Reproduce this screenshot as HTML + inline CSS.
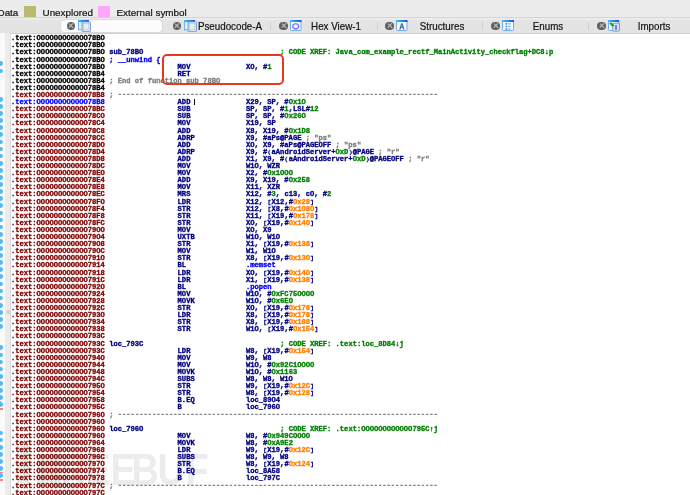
<!DOCTYPE html>
<html><head><meta charset="utf-8">
<style>
html,body{margin:0;padding:0;width:690px;height:495px;overflow:hidden;background:#fff;position:relative}
*{box-sizing:border-box}
.legend{position:absolute;left:0;top:0;width:690px;height:18px;background:#ececec;border-bottom:0.8px solid #d4d4d4}
.lt{position:absolute;top:6.9px;font:9.9px "Liberation Sans",sans-serif;color:#111;white-space:pre;line-height:12px;-webkit-text-stroke:0.2px #111;filter:grayscale(0)}
.sw{position:absolute;top:6.2px;width:11.5px;height:11px}
.tabbar{position:absolute;left:0;top:18px;width:690px;height:15.5px;background:linear-gradient(#efefef 0,#ececec 1.2px,#e4e4e4 2.5px,#e3e3e3 100%);border-bottom:1px solid #cdcdcd}
.atab{position:absolute;left:60.3px;top:18.6px;width:102.3px;height:14.4px;background:#fcfcfc;border-radius:4.5px;border:1px solid #d9d9d9}
.cls{position:absolute;top:21.9px;width:8.6px;height:8.6px;border-radius:50%;background:#5f5f5f}
.cls:before,.cls:after{content:"";position:absolute;left:1.5px;top:3.6px;width:5.6px;height:1.4px;background:#c4c4c4;transform:rotate(45deg)}
.cls:after{transform:rotate(-45deg)}
.ico{position:absolute;top:20px}
.tt{position:absolute;top:20.5px;font:10.3px "Liberation Sans",sans-serif;transform:scaleX(0.95);color:#111;white-space:pre;line-height:12px;-webkit-text-stroke:0.2px #111;filter:grayscale(0);text-align:center;width:100px}
.sep{position:absolute;top:22px;width:1px;height:8px;background:#cfcfcf}
.lm{position:absolute;left:0;top:33px;width:5px;height:462px;background:#fafafa}
.gs{position:absolute;left:5px;top:33px;width:5.6px;height:462px;background:#ebebeb;border-right:1px solid #dcdcdc}
.codebox{position:absolute;left:10.5px;top:33px;width:680px;height:462px;background:#fff;border-top:1px solid #d0d0d0}
.dot{position:absolute;left:-2.9px;width:5.9px;height:4.8px;border-radius:50%;background:#55b8f6}
.pk{position:absolute;left:0;width:3px;height:1.6px;background:#ff7f80}
.sc{position:absolute;left:6px;top:309.5px;width:4.6px;height:4.6px;border-radius:50%;background:#d2d2d2}
.code{position:absolute;left:11.0px;top:0;width:680px;height:495px;filter:grayscale(0)}
.r{position:absolute;left:0;height:7.1px;width:680px;font:bold 7.12px "Liberation Mono",monospace;line-height:7.1px;white-space:pre;-webkit-text-stroke:0.35px currentColor}
.br{display:inline-block;font-weight:normal;transform:scaleY(0.78);transform-origin:50% 58%}
.r i{position:absolute;top:0;font-style:normal}
.n{color:#00007f}.b{color:#0000ff}.g{color:#007f00}.o{color:#ff7f00}.m{color:#7f0000}.k{color:#000}.gr{color:#7f7f7f}
.redbox{position:absolute;left:162px;top:54.1px;width:121.6px;height:30.6px;border:2.2px solid #e8391f;border-radius:5px}
.cursor{position:absolute;left:193.8px;top:98.6px;width:1.1px;height:6.6px;background:#000}
.wm{position:absolute;top:448px;font:bold 44px "Liberation Sans",sans-serif;line-height:43px;color:#ececec;white-space:pre;transform:scaleX(0.86);transform-origin:3px 0}
.wmg{position:absolute;background:#e5f0e9}
</style></head><body>
<div class="legend"></div>
<div class="lt" style="left:-2.5px">Data</div>
<div class="sw" style="left:24px;background:#b9b96f"></div>
<div class="lt" style="left:42.5px">Unexplored</div>
<div class="sw" style="left:98px;background:#ffa6fa"></div>
<div class="lt" style="left:116.5px">External symbol</div>

<div class="tabbar"></div>
<div class="atab"></div>
<div class="cls" style="left:66.8px"></div>
<svg class="ico" style="left:77.6px" width="13" height="12" viewBox="0 0 13 12">
 <defs><linearGradient id="tb" x1="0" x2="1"><stop offset="0" stop-color="#3cc8f6"/><stop offset="1" stop-color="#1d4fd6"/></linearGradient>
 <linearGradient id="fw" x1="0" x2="1"><stop offset="0" stop-color="#c9d3e0"/><stop offset="0.5" stop-color="#f4f7fb"/><stop offset="1" stop-color="#d2e2f5"/></linearGradient></defs>
 <rect x="0.4" y="0.4" width="10" height="9.4" fill="#e8faff" stroke="#3f8be6" stroke-width="0.8"/>
 <rect x="0" y="0" width="10.8" height="2.3" fill="url(#tb)"/>
 <rect x="0.8" y="2.4" width="2.6" height="7" fill="#d2f6ff"/>
 <rect x="4" y="1.9" width="8.5" height="9.5" rx="0.6" fill="url(#fw)" stroke="#6a98d4" stroke-width="0.9"/>
 <rect x="5.6" y="3.6" width="5.2" height="6" fill="#e9eef5" stroke="#a9b9cf" stroke-width="0.5"/>
</svg>

<div class="cls" style="left:172.8px"></div>
<svg class="ico" style="left:183.8px" width="13" height="12" viewBox="0 0 13 12">
 
 <rect x="0.4" y="0.4" width="10" height="9.4" fill="#e8faff" stroke="#3f8be6" stroke-width="0.8"/>
 <rect x="0" y="0" width="10.8" height="2.3" fill="url(#tb)"/>
 <rect x="0.8" y="2.4" width="2.6" height="7" fill="#d2f6ff"/>
 <rect x="4" y="1.9" width="8.5" height="9.5" rx="0.6" fill="url(#fw)" stroke="#6a98d4" stroke-width="0.9"/>
 <rect x="5.6" y="3.6" width="5.2" height="6" fill="#e9eef5" stroke="#a9b9cf" stroke-width="0.5"/>
</svg>
<div class="tt" style="left:180px">Pseudocode-A</div>
<div class="sep" style="left:270px"></div>

<div class="cls" style="left:279.1px"></div>
<svg class="ico" style="left:290.2px" width="11.5" height="11" viewBox="0 0 11.5 11">
 <rect x="0.5" y="0.5" width="10.5" height="10" rx="1" fill="#f4fbff" stroke="#6aa3e8" stroke-width="0.9"/>
 <rect x="0" y="0" width="11.5" height="2" fill="url(#tb)"/>
 <ellipse cx="5.7" cy="6.3" rx="3" ry="2.6" fill="#e8f4ff" stroke="#6b6bff" stroke-width="1.1"/>
</svg>
<div class="tt" style="left:286px">Hex View-1</div>
<div class="sep" style="left:376.5px"></div>

<div class="cls" style="left:385px"></div>
<svg class="ico" style="left:396.1px" width="11.5" height="11" viewBox="0 0 11.5 11">
 <rect x="0.5" y="0.5" width="10.5" height="10" rx="1" fill="#f4fbff" stroke="#6aa3e8" stroke-width="0.9"/>
 <rect x="0" y="0" width="11.5" height="2" fill="url(#tb)"/>
 <path d="M3.2 9.6 L5.1 3.2 L6.6 3.2 L8.5 9.6 L7.1 9.6 L6.6 7.8 L5.1 7.8 L4.6 9.6 Z M5.4 6.6 L6.3 6.6 L5.85 4.6 Z" fill="#3b6fa8"/>
</svg>
<div class="tt" style="left:392px">Structures</div>
<div class="sep" style="left:482px"></div>

<div class="cls" style="left:491px"></div>
<svg class="ico" style="left:501.9px" width="12" height="11" viewBox="0 0 12 11">
 <rect x="0.5" y="0.5" width="11" height="10" rx="1" fill="#eefaff" stroke="#6aa3e8" stroke-width="0.9"/>
 <rect x="0" y="0" width="12" height="2" fill="url(#tb)"/>
 <rect x="3.6" y="3" width="1.6" height="1.6" fill="#3a86c8"/><rect x="6" y="3.2" width="2.6" height="1.2" fill="#7fb5e6"/>
 <rect x="3.6" y="5.6" width="1.6" height="1.6" fill="#3a86c8"/><rect x="6" y="5.8" width="2.6" height="1.2" fill="#7fb5e6"/>
 <rect x="3.6" y="8.2" width="1.6" height="1.6" fill="#3a86c8"/><rect x="6" y="8.4" width="2.6" height="1.2" fill="#7fb5e6"/>
</svg>
<div class="tt" style="left:498px">Enums</div>
<div class="sep" style="left:587.7px"></div>

<div class="cls" style="left:597px"></div>
<svg class="ico" style="left:607.9px" width="12" height="12" viewBox="0 0 12 12">
 <rect x="0.5" y="0.5" width="10.5" height="10" rx="1" fill="#eefaff" stroke="#6aa3e8" stroke-width="0.9"/>
 <rect x="0" y="0" width="11" height="2" fill="url(#tb)"/>
 <rect x="4.8" y="3.2" width="6.6" height="8" rx="0.8" fill="#dbe6f5" stroke="#6f95c8" stroke-width="0.9"/>
 <rect x="7" y="5" width="2" height="5" fill="#7a7ae8"/>
 <path d="M1.3 3.2 L3.2 2.3 L6.2 5.3 L4.6 6.9 Z" fill="#1a9a2a"/>
</svg>
<div class="tt" style="left:604px">Imports</div>

<div class="lm"></div>
<div class="gs"></div>
<div class="codebox"></div>
<div class="dot" style="top:61.40px"></div>
<div class="dot" style="top:68.50px"></div>
<div class="dot" style="top:96.90px"></div>
<div class="dot" style="top:104.00px"></div>
<div class="dot" style="top:111.10px"></div>
<div class="dot" style="top:118.20px"></div>
<div class="dot" style="top:125.30px"></div>
<div class="dot" style="top:132.40px"></div>
<div class="dot" style="top:139.50px"></div>
<div class="dot" style="top:146.60px"></div>
<div class="dot" style="top:153.70px"></div>
<div class="dot" style="top:160.80px"></div>
<div class="dot" style="top:167.90px"></div>
<div class="dot" style="top:175.00px"></div>
<div class="dot" style="top:182.10px"></div>
<div class="dot" style="top:189.20px"></div>
<div class="dot" style="top:196.30px"></div>
<div class="dot" style="top:203.40px"></div>
<div class="dot" style="top:210.50px"></div>
<div class="dot" style="top:217.60px"></div>
<div class="dot" style="top:224.70px"></div>
<div class="dot" style="top:231.80px"></div>
<div class="dot" style="top:238.90px"></div>
<div class="dot" style="top:246.00px"></div>
<div class="dot" style="top:253.10px"></div>
<div class="dot" style="top:260.20px"></div>
<div class="dot" style="top:267.30px"></div>
<div class="dot" style="top:274.40px"></div>
<div class="dot" style="top:281.50px"></div>
<div class="dot" style="top:288.60px"></div>
<div class="dot" style="top:295.70px"></div>
<div class="dot" style="top:302.80px"></div>
<div class="dot" style="top:309.90px"></div>
<div class="dot" style="top:317.00px"></div>
<div class="dot" style="top:324.10px"></div>
<div class="dot" style="top:345.40px"></div>
<div class="dot" style="top:352.50px"></div>
<div class="dot" style="top:359.60px"></div>
<div class="dot" style="top:366.70px"></div>
<div class="dot" style="top:373.80px"></div>
<div class="dot" style="top:380.90px"></div>
<div class="dot" style="top:388.00px"></div>
<div class="dot" style="top:395.10px"></div>
<div class="dot" style="top:402.20px"></div>
<div class="dot" style="top:430.60px"></div>
<div class="dot" style="top:437.70px"></div>
<div class="dot" style="top:444.80px"></div>
<div class="dot" style="top:451.90px"></div>
<div class="dot" style="top:459.00px"></div>
<div class="dot" style="top:466.10px"></div>
<div class="dot" style="top:473.20px"></div>
<div class="pk" style="top:400.90px;width:1.2px"></div>
<div class="pk" style="top:408.10px;width:3px"></div>
<div class="pk" style="top:471.90px;width:3px"></div>
<div class="pk" style="top:479.00px;width:3px"></div>
<div class="sc"></div>

<div class="wmg" style="left:17.5px;top:446px;width:11.6px;height:37px"></div>
<div class="wmg" style="left:36.7px;top:453.7px;width:23.2px;height:29.6px"></div>
<div class="wm" style="left:59.0px">R</div><div class="wm" style="left:85.0px">E</div><div class="wm" style="left:110.0px">E</div><div class="wm" style="left:131.0px">B</div><div class="wm" style="left:157.0px">U</div><div class="wm" style="left:185.0px">F</div>
<div class="code">
<div class="r" style="top:35.25px"><i style="left:0.000px"><span class="k">.text:OOOOOOOOOOOO78BO</span></i></div>
<div class="r" style="top:42.35px"><i style="left:0.000px"><span class="k">.text:OOOOOOOOOOOO78BO</span></i></div>
<div class="r" style="top:49.45px"><i style="left:0.000px"><span class="k">.text:OOOOOOOOOOOO78BO</span></i><i style="left:98.256px"><span class="n">sub_78BO</span></i><i style="left:269.136px"><span class="g">; CODE XREF: Java_com_example_rectf_MainActivity_checkflag+DC8↓p</span></i></div>
<div class="r" style="top:56.55px"><i style="left:0.000px"><span class="k">.text:OOOOOOOOOOOO78BO</span></i><i style="left:98.256px"><span class="b">; __unwind {</span></i></div>
<div class="r" style="top:63.65px"><i style="left:0.000px"><span class="k">.text:OOOOOOOOOOOO78BO</span></i><i style="left:166.608px"><span class="n">MOV</span></i><i style="left:234.960px"><span class="n">XO, #</span><span class="g">1</span></i></div>
<div class="r" style="top:70.75px"><i style="left:0.000px"><span class="k">.text:OOOOOOOOOOOO78B4</span></i><i style="left:166.608px"><span class="n">RET</span></i></div>
<div class="r" style="top:77.85px"><i style="left:0.000px"><span class="k">.text:OOOOOOOOOOOO78B4</span></i><i style="left:98.256px"><span class="gr">; End of function sub_78BO</span></i></div>
<div class="r" style="top:84.95px"><i style="left:0.000px"><span class="k">.text:OOOOOOOOOOOO78B4</span></i></div>
<div class="r" style="top:92.05px"><i style="left:0.000px"><span class="m">.text:OOOOOOOOOOOO78B8</span></i><i style="left:98.256px"><span class="gr">;</span> <span class="gr" style="position:relative;top:-0.7px">---------------------------------------------------------------------------</span></i></div>
<div class="r" style="top:99.15px"><i style="left:0.000px"><span class="b">.text:OOOOOOOOOOOO78B8</span></i><i style="left:166.608px"><span class="n">ADD</span></i><i style="left:234.960px"><span class="n">X29, SP, #</span><span class="g">Ox1O</span></i></div>
<div class="r" style="top:106.25px"><i style="left:0.000px"><span class="m">.text:OOOOOOOOOOOO78BC</span></i><i style="left:166.608px"><span class="n">SUB</span></i><i style="left:234.960px"><span class="n">SP, SP, #</span><span class="g">1</span><span class="n">,LSL#</span><span class="g">12</span></i></div>
<div class="r" style="top:113.35px"><i style="left:0.000px"><span class="m">.text:OOOOOOOOOOOO78CO</span></i><i style="left:166.608px"><span class="n">SUB</span></i><i style="left:234.960px"><span class="n">SP, SP, #</span><span class="g">Ox26O</span></i></div>
<div class="r" style="top:120.45px"><i style="left:0.000px"><span class="m">.text:OOOOOOOOOOOO78C4</span></i><i style="left:166.608px"><span class="n">MOV</span></i><i style="left:234.960px"><span class="n">X19, SP</span></i></div>
<div class="r" style="top:127.55px"><i style="left:0.000px"><span class="m">.text:OOOOOOOOOOOO78C8</span></i><i style="left:166.608px"><span class="n">ADD</span></i><i style="left:234.960px"><span class="n">X8, X19, #</span><span class="g">Ox1D8</span></i></div>
<div class="r" style="top:134.65px"><i style="left:0.000px"><span class="m">.text:OOOOOOOOOOOO78CC</span></i><i style="left:166.608px"><span class="n">ADRP</span></i><i style="left:234.960px"><span class="n">X9, #aPs@PAGE </span><span class="gr">; "ps"</span></i></div>
<div class="r" style="top:141.75px"><i style="left:0.000px"><span class="m">.text:OOOOOOOOOOOO78DO</span></i><i style="left:166.608px"><span class="n">ADD</span></i><i style="left:234.960px"><span class="n">XO, X9, #aPs@PAGEOFF </span><span class="gr">; "ps"</span></i></div>
<div class="r" style="top:148.85px"><i style="left:0.000px"><span class="m">.text:OOOOOOOOOOOO78D4</span></i><i style="left:166.608px"><span class="n">ADRP</span></i><i style="left:234.960px"><span class="n">X9, #<b class="br">(</b>aAndroidServer+</span><span class="g">OxD</span><span class="n"><b class="br">)</b>@PAGE </span><span class="gr">; "r"</span></i></div>
<div class="r" style="top:155.95px"><i style="left:0.000px"><span class="m">.text:OOOOOOOOOOOO78D8</span></i><i style="left:166.608px"><span class="n">ADD</span></i><i style="left:234.960px"><span class="n">X1, X9, #<b class="br">(</b>aAndroidServer+</span><span class="g">OxD</span><span class="n"><b class="br">)</b>@PAGEOFF </span><span class="gr">; "r"</span></i></div>
<div class="r" style="top:163.05px"><i style="left:0.000px"><span class="m">.text:OOOOOOOOOOOO78DC</span></i><i style="left:166.608px"><span class="n">MOV</span></i><i style="left:234.960px"><span class="n">W1O, WZR</span></i></div>
<div class="r" style="top:170.15px"><i style="left:0.000px"><span class="m">.text:OOOOOOOOOOOO78EO</span></i><i style="left:166.608px"><span class="n">MOV</span></i><i style="left:234.960px"><span class="n">X2, #</span><span class="g">Ox1OOO</span></i></div>
<div class="r" style="top:177.25px"><i style="left:0.000px"><span class="m">.text:OOOOOOOOOOOO78E4</span></i><i style="left:166.608px"><span class="n">ADD</span></i><i style="left:234.960px"><span class="n">X9, X19, #</span><span class="g">Ox258</span></i></div>
<div class="r" style="top:184.35px"><i style="left:0.000px"><span class="m">.text:OOOOOOOOOOOO78E8</span></i><i style="left:166.608px"><span class="n">MOV</span></i><i style="left:234.960px"><span class="n">X11, XZR</span></i></div>
<div class="r" style="top:191.45px"><i style="left:0.000px"><span class="m">.text:OOOOOOOOOOOO78EC</span></i><i style="left:166.608px"><span class="n">MRS</span></i><i style="left:234.960px"><span class="n">X12, #</span><span class="g">3</span><span class="n">, c13, cO, #</span><span class="g">2</span></i></div>
<div class="r" style="top:198.55px"><i style="left:0.000px"><span class="m">.text:OOOOOOOOOOOO78FO</span></i><i style="left:166.608px"><span class="n">LDR</span></i><i style="left:234.960px"><span class="n">X12, <b class="br">[</b>X12,#</span><span class="o">Ox28</span><span class="n"><b class="br">]</b></span></i></div>
<div class="r" style="top:205.65px"><i style="left:0.000px"><span class="m">.text:OOOOOOOOOOOO78F4</span></i><i style="left:166.608px"><span class="n">STR</span></i><i style="left:234.960px"><span class="n">X12, <b class="br">[</b>X8,#</span><span class="o">Ox1O8O</span><span class="n"><b class="br">]</b></span></i></div>
<div class="r" style="top:212.75px"><i style="left:0.000px"><span class="m">.text:OOOOOOOOOOOO78F8</span></i><i style="left:166.608px"><span class="n">STR</span></i><i style="left:234.960px"><span class="n">X11, <b class="br">[</b>X19,#</span><span class="o">Ox178</span><span class="n"><b class="br">]</b></span></i></div>
<div class="r" style="top:219.85px"><i style="left:0.000px"><span class="m">.text:OOOOOOOOOOOO78FC</span></i><i style="left:166.608px"><span class="n">STR</span></i><i style="left:234.960px"><span class="n">XO, <b class="br">[</b>X19,#</span><span class="o">Ox14O</span><span class="n"><b class="br">]</b></span></i></div>
<div class="r" style="top:226.95px"><i style="left:0.000px"><span class="m">.text:OOOOOOOOOOOO79OO</span></i><i style="left:166.608px"><span class="n">MOV</span></i><i style="left:234.960px"><span class="n">XO, X9</span></i></div>
<div class="r" style="top:234.05px"><i style="left:0.000px"><span class="m">.text:OOOOOOOOOOOO79O4</span></i><i style="left:166.608px"><span class="n">UXTB</span></i><i style="left:234.960px"><span class="n">W1O, W1O</span></i></div>
<div class="r" style="top:241.15px"><i style="left:0.000px"><span class="m">.text:OOOOOOOOOOOO79O8</span></i><i style="left:166.608px"><span class="n">STR</span></i><i style="left:234.960px"><span class="n">X1, <b class="br">[</b>X19,#</span><span class="o">Ox138</span><span class="n"><b class="br">]</b></span></i></div>
<div class="r" style="top:248.25px"><i style="left:0.000px"><span class="m">.text:OOOOOOOOOOOO79OC</span></i><i style="left:166.608px"><span class="n">MOV</span></i><i style="left:234.960px"><span class="n">W1, W1O</span></i></div>
<div class="r" style="top:255.35px"><i style="left:0.000px"><span class="m">.text:OOOOOOOOOOOO791O</span></i><i style="left:166.608px"><span class="n">STR</span></i><i style="left:234.960px"><span class="n">X8, <b class="br">[</b>X19,#</span><span class="o">Ox13O</span><span class="n"><b class="br">]</b></span></i></div>
<div class="r" style="top:262.45px"><i style="left:0.000px"><span class="m">.text:OOOOOOOOOOOO7914</span></i><i style="left:166.608px"><span class="n">BL</span></i><i style="left:234.960px"><span class="b">.memset</span></i></div>
<div class="r" style="top:269.55px"><i style="left:0.000px"><span class="m">.text:OOOOOOOOOOOO7918</span></i><i style="left:166.608px"><span class="n">LDR</span></i><i style="left:234.960px"><span class="n">XO, <b class="br">[</b>X19,#</span><span class="o">Ox14O</span><span class="n"><b class="br">]</b></span></i></div>
<div class="r" style="top:276.65px"><i style="left:0.000px"><span class="m">.text:OOOOOOOOOOOO791C</span></i><i style="left:166.608px"><span class="n">LDR</span></i><i style="left:234.960px"><span class="n">X1, <b class="br">[</b>X19,#</span><span class="o">Ox138</span><span class="n"><b class="br">]</b></span></i></div>
<div class="r" style="top:283.75px"><i style="left:0.000px"><span class="m">.text:OOOOOOOOOOOO792O</span></i><i style="left:166.608px"><span class="n">BL</span></i><i style="left:234.960px"><span class="b">.popen</span></i></div>
<div class="r" style="top:290.85px"><i style="left:0.000px"><span class="m">.text:OOOOOOOOOOOO7924</span></i><i style="left:166.608px"><span class="n">MOV</span></i><i style="left:234.960px"><span class="n">W1O, #</span><span class="g">OxFC75OOOO</span></i></div>
<div class="r" style="top:297.95px"><i style="left:0.000px"><span class="m">.text:OOOOOOOOOOOO7928</span></i><i style="left:166.608px"><span class="n">MOVK</span></i><i style="left:234.960px"><span class="n">W1O, #</span><span class="g">Ox6EO</span></i></div>
<div class="r" style="top:305.05px"><i style="left:0.000px"><span class="m">.text:OOOOOOOOOOOO792C</span></i><i style="left:166.608px"><span class="n">STR</span></i><i style="left:234.960px"><span class="n">XO, <b class="br">[</b>X19,#</span><span class="o">Ox178</span><span class="n"><b class="br">]</b></span></i></div>
<div class="r" style="top:312.15px"><i style="left:0.000px"><span class="m">.text:OOOOOOOOOOOO793O</span></i><i style="left:166.608px"><span class="n">LDR</span></i><i style="left:234.960px"><span class="n">X8, <b class="br">[</b>X19,#</span><span class="o">Ox178</span><span class="n"><b class="br">]</b></span></i></div>
<div class="r" style="top:319.25px"><i style="left:0.000px"><span class="m">.text:OOOOOOOOOOOO7934</span></i><i style="left:166.608px"><span class="n">STR</span></i><i style="left:234.960px"><span class="n">X8, <b class="br">[</b>X19,#</span><span class="o">Ox188</span><span class="n"><b class="br">]</b></span></i></div>
<div class="r" style="top:326.35px"><i style="left:0.000px"><span class="m">.text:OOOOOOOOOOOO7938</span></i><i style="left:166.608px"><span class="n">STR</span></i><i style="left:234.960px"><span class="n">W1O, <b class="br">[</b>X19,#</span><span class="o">Ox154</span><span class="n"><b class="br">]</b></span></i></div>
<div class="r" style="top:333.45px"><i style="left:0.000px"><span class="m">.text:OOOOOOOOOOOO793C</span></i></div>
<div class="r" style="top:340.55px"><i style="left:0.000px"><span class="m">.text:OOOOOOOOOOOO793C</span></i><i style="left:98.256px"><span class="n">loc_793C</span></i><i style="left:269.136px"><span class="g">; CODE XREF: .text:loc_8D84↓j</span></i></div>
<div class="r" style="top:347.65px"><i style="left:0.000px"><span class="m">.text:OOOOOOOOOOOO793C</span></i><i style="left:166.608px"><span class="n">LDR</span></i><i style="left:234.960px"><span class="n">W8, <b class="br">[</b>X19,#</span><span class="o">Ox154</span><span class="n"><b class="br">]</b></span></i></div>
<div class="r" style="top:354.75px"><i style="left:0.000px"><span class="m">.text:OOOOOOOOOOOO794O</span></i><i style="left:166.608px"><span class="n">MOV</span></i><i style="left:234.960px"><span class="n">W9, W8</span></i></div>
<div class="r" style="top:361.85px"><i style="left:0.000px"><span class="m">.text:OOOOOOOOOOOO7944</span></i><i style="left:166.608px"><span class="n">MOV</span></i><i style="left:234.960px"><span class="n">W1O, #</span><span class="g">Ox92C1OOOO</span></i></div>
<div class="r" style="top:368.95px"><i style="left:0.000px"><span class="m">.text:OOOOOOOOOOOO7948</span></i><i style="left:166.608px"><span class="n">MOVK</span></i><i style="left:234.960px"><span class="n">W1O, #</span><span class="g">Ox1163</span></i></div>
<div class="r" style="top:376.05px"><i style="left:0.000px"><span class="m">.text:OOOOOOOOOOOO794C</span></i><i style="left:166.608px"><span class="n">SUBS</span></i><i style="left:234.960px"><span class="n">W8, W8, W1O</span></i></div>
<div class="r" style="top:383.15px"><i style="left:0.000px"><span class="m">.text:OOOOOOOOOOOO795O</span></i><i style="left:166.608px"><span class="n">STR</span></i><i style="left:234.960px"><span class="n">W9, <b class="br">[</b>X19,#</span><span class="o">Ox12C</span><span class="n"><b class="br">]</b></span></i></div>
<div class="r" style="top:390.25px"><i style="left:0.000px"><span class="m">.text:OOOOOOOOOOOO7954</span></i><i style="left:166.608px"><span class="n">STR</span></i><i style="left:234.960px"><span class="n">W8, <b class="br">[</b>X19,#</span><span class="o">Ox128</span><span class="n"><b class="br">]</b></span></i></div>
<div class="r" style="top:397.35px"><i style="left:0.000px"><span class="m">.text:OOOOOOOOOOOO7958</span></i><i style="left:166.608px"><span class="n">B.EQ</span></i><i style="left:234.960px"><span class="n">loc_89O4</span></i></div>
<div class="r" style="top:404.45px"><i style="left:0.000px"><span class="m">.text:OOOOOOOOOOOO795C</span></i><i style="left:166.608px"><span class="n">B</span></i><i style="left:234.960px"><span class="n">loc_796O</span></i></div>
<div class="r" style="top:411.55px"><i style="left:0.000px"><span class="m">.text:OOOOOOOOOOOO796O</span></i><i style="left:98.256px"><span class="gr">;</span> <span class="gr" style="position:relative;top:-0.7px">---------------------------------------------------------------------------</span></i></div>
<div class="r" style="top:418.65px"><i style="left:0.000px"><span class="m">.text:OOOOOOOOOOOO796O</span></i></div>
<div class="r" style="top:425.75px"><i style="left:0.000px"><span class="m">.text:OOOOOOOOOOOO796O</span></i><i style="left:98.256px"><span class="n">loc_796O</span></i><i style="left:269.136px"><span class="g">; CODE XREF: .text:OOOOOOOOOOOO795C↑j</span></i></div>
<div class="r" style="top:432.85px"><i style="left:0.000px"><span class="m">.text:OOOOOOOOOOOO796O</span></i><i style="left:166.608px"><span class="n">MOV</span></i><i style="left:234.960px"><span class="n">W8, #</span><span class="g">Ox949COOOO</span></i></div>
<div class="r" style="top:439.95px"><i style="left:0.000px"><span class="m">.text:OOOOOOOOOOOO7964</span></i><i style="left:166.608px"><span class="n">MOVK</span></i><i style="left:234.960px"><span class="n">W8, #</span><span class="g">OxA9E2</span></i></div>
<div class="r" style="top:447.05px"><i style="left:0.000px"><span class="m">.text:OOOOOOOOOOOO7968</span></i><i style="left:166.608px"><span class="n">LDR</span></i><i style="left:234.960px"><span class="n">W9, <b class="br">[</b>X19,#</span><span class="o">Ox12C</span><span class="n"><b class="br">]</b></span></i></div>
<div class="r" style="top:454.15px"><i style="left:0.000px"><span class="m">.text:OOOOOOOOOOOO796C</span></i><i style="left:166.608px"><span class="n">SUBS</span></i><i style="left:234.960px"><span class="n">W8, W9, W8</span></i></div>
<div class="r" style="top:461.25px"><i style="left:0.000px"><span class="m">.text:OOOOOOOOOOOO797O</span></i><i style="left:166.608px"><span class="n">STR</span></i><i style="left:234.960px"><span class="n">W8, <b class="br">[</b>X19,#</span><span class="o">Ox124</span><span class="n"><b class="br">]</b></span></i></div>
<div class="r" style="top:468.35px"><i style="left:0.000px"><span class="m">.text:OOOOOOOOOOOO7974</span></i><i style="left:166.608px"><span class="n">B.EQ</span></i><i style="left:234.960px"><span class="n">loc_8A58</span></i></div>
<div class="r" style="top:475.45px"><i style="left:0.000px"><span class="m">.text:OOOOOOOOOOOO7978</span></i><i style="left:166.608px"><span class="n">B</span></i><i style="left:234.960px"><span class="n">loc_797C</span></i></div>
<div class="r" style="top:482.55px"><i style="left:0.000px"><span class="m">.text:OOOOOOOOOOOO797C</span></i><i style="left:98.256px"><span class="gr">;</span> <span class="gr" style="position:relative;top:-0.7px">---------------------------------------------------------------------------</span></i></div>
<div class="r" style="top:489.65px"><i style="left:0.000px"><span class="m">.text:OOOOOOOOOOOO797C</span></i></div>
</div>
<div class="redbox"></div>
<div class="cursor"></div>
</body></html>
